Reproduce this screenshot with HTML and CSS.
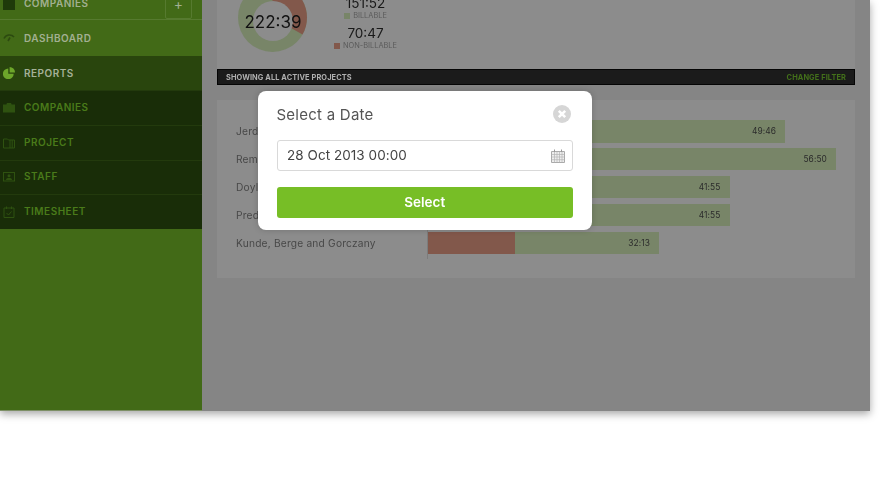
FILE: index.html
```html
<!DOCTYPE html>
<html lang="en">
<head>
<meta charset="utf-8">
<title>Select a Date</title>
<link rel="stylesheet" href="styles.css">
</head>
<body>
<div class="window">
  <div class="app">
    <aside class="sidebar">
      <div class="side-head">
        <svg class="icon" viewBox="0 0 12 12"><rect x="0" y="0" width="12" height="10" fill="#1f3a0a"/></svg>
        <span class="nav-text head-text">COMPANIES</span>
        <span class="plus">+</span>
      </div>
      <a class="nav nav-light">
        <svg class="icon" viewBox="0 0 12 12"><path d="M1 6.500A6 6 0 0 1 11 5" fill="none" stroke="#2c4a10" stroke-width="1.600"/><path d="M5 9l2-3.500" stroke="#2c4a10" stroke-width="1.600"/></svg>
        <span class="nav-text">DASHBOARD</span>
      </a>
      <a class="nav nav-active">
        <svg class="icon" viewBox="0 0 12 12"><path d="M5.300 1.400v5.300h5.400A5.400 5.400 0 1 1 5.300 1.400z" fill="#6da62a"/><path d="M6.600 0A5.400 5.400 0 0 1 12 5.400H6.600z" fill="#6da62a"/></svg>
        <span class="nav-text">REPORTS</span>
      </a>
      <a class="nav nav-dark">
        <svg class="icon" viewBox="0 0 12 12"><path d="M0 3h12v7H0zM4 3V1.500h4V3" fill="#2f5210" stroke="#2f5210"/></svg>
        <span class="nav-text">COMPANIES</span>
      </a>
      <a class="nav nav-dark">
        <svg class="icon" viewBox="0 0 12 12"><path d="M.5 2h4l1 1h6v8h-11zM7 3v8M9.200 3v8" fill="none" stroke="#2f5210"/></svg>
        <span class="nav-text">PROJECT</span>
      </a>
      <a class="nav nav-dark">
        <svg class="icon" viewBox="0 0 12 12"><rect x=".5" y="1.500" width="11" height="8.500" fill="none" stroke="#2f5210"/><circle cx="6" cy="4.800" r="1.500" fill="#2f5210"/><path d="M3 9c0-3 6-3 6 0z" fill="#2f5210"/></svg>
        <span class="nav-text">STAFF</span>
      </a>
      <a class="nav nav-dark nav-last">
        <svg class="icon" viewBox="0 0 12 12"><path d="M1 2h10v9.500H1zM3.500 .5v2.500M8.500 .5v2.500M3.500 7l2 2 3-3.500" fill="none" stroke="#2f5210"/></svg>
        <span class="nav-text">TIMESHEET</span>
      </a>
    </aside>
    <main class="main">
      <section class="summary">
        <svg class="donut" viewBox="0 0 70 70">
          <circle cx="34.500" cy="34.500" r="34.500" fill="#788568"/>
          <path d="M34.500 34.500V0A34.500 34.500 0 0 1 64.500 51.500z" fill="#82584b"/>
          <circle cx="35" cy="38" r="20" fill="#8c8c8c"/>
        </svg>
        <span class="donut-total">222:39</span>
        <div class="legend">
          <div class="legend-value">151:52</div>
          <div class="legend-key"><i class="swatch swatch-green"></i>BILLABLE</div>
          <div class="legend-value legend-gap">70:47</div>
          <div class="legend-key"><i class="swatch swatch-red"></i>NON-BILLABLE</div>
        </div>
      </section>
      <div class="filter-bar">
        <span class="filter-title">SHOWING ALL ACTIVE PROJECTS</span>
        <span class="filter-link">CHANGE FILTER</span>
      </div>
      <section class="chart">
        <div class="row">
          <span class="row-label">Jerde Group</span>
          <div class="bar"><span class="bar-red" style="width:90px"></span><span class="bar-green" style="width:267px">49:46</span></div>
        </div>
        <div class="row">
          <span class="row-label">Remple Inc</span>
          <div class="bar"><span class="bar-red" style="width:90px"></span><span class="bar-green" style="width:318px">56:50</span></div>
        </div>
        <div class="row">
          <span class="row-label">Doyle LLC</span>
          <div class="bar"><span class="bar-red" style="width:90px"></span><span class="bar-green" style="width:211.500px">41:55</span></div>
        </div>
        <div class="row">
          <span class="row-label">Predovic Ltd</span>
          <div class="bar"><span class="bar-red" style="width:90px"></span><span class="bar-green" style="width:211.500px">41:55</span></div>
        </div>
        <div class="row">
          <span class="row-label">Kunde, Berge and Gorczany</span>
          <div class="bar"><span class="bar-red" style="width:87px"></span><span class="bar-green" style="width:144px">32:13</span></div>
        </div>
      </section>
    </main>
  </div>
  <div class="modal">
    <div class="modal-head">
      <h2 class="modal-title">Select a Date</h2>
      <svg class="close" viewBox="0 0 18 18"><circle cx="9" cy="9" r="9" fill="#d6d6d6"/><path d="M5.800 5.800l6.400 6.400M12.200 5.800l-6.400 6.400" stroke="#fff" stroke-width="2.600"/></svg>
    </div>
    <div class="field">
      <span class="field-text">28 Oct 2013 00:00</span>
      <svg class="cal" viewBox="0 0 14 14"><path d="M.5 2.500h13v11H.5z" fill="#eee" stroke="#aaa"/><path d="M.5 5.500h13M.5 8h13M.5 10.700h13M3.500 2.500v11M6 2.500v11M8.500 2.500v11M11 2.500v11" stroke="#b5b5b5" stroke-width=".7"/><path d="M3.500 .5v2.500M10.500 .5v2.500" stroke="#999"/></svg>
    </div>
    <button class="select-btn" type="button">Select</button>
  </div>
</div>
</body>
</html>
```

FILE: styles.css
```css
* { box-sizing: border-box; }
html, body { margin: 0; padding: 0; background: #fff; }
body { font-family: "Inter", "Liberation Sans", sans-serif; height: 500px; overflow: hidden; }

.window {
  position: relative;
  width: 870px;
  height: 411px;
  overflow: hidden;
  background: #858585;
  box-shadow: 0 3px 8px rgba(0,0,0,.35);
}
.app {
  display: flex;
  height: 431px;
  margin-top: -20px;
  filter: blur(.45px);
}

/* Sidebar */
.sidebar {
  flex: 0 0 202px;
  background: #426a17;
  border-bottom: 1px solid #7d8f66;
}
.side-head {
  display: flex;
  align-items: center;
  height: 40px;
  padding: 13px 10px 0 3px;
  border-bottom: 1px solid #567a2f;
}
.icon { flex: 0 0 12px; width: 12px; height: 12px; margin-right: 9px; }
.nav-text {
  font-size: 10px;
  font-weight: 600;
  letter-spacing: .5px;
  color: #a2b091;
}
.head-text { flex: 1; position: relative; top: -3px; }
.plus {
  width: 27px;
  height: 27px;
  margin-top: -1px;
  border: 1px solid #567a2f;
  border-radius: 2px;
  color: #a2b091;
  font-size: 14px;
  line-height: 22px;
  text-align: center;
}
.nav {
  display: flex;
  align-items: center;
  height: 34.700px;
  padding-left: 3px;
}
.nav-light { height: 35.500px; }
.nav-active { background: #29450d; }
.nav-active .nav-text { color: #a5b198; }
.nav-dark { background: #192d08; border-top: 1px solid #233a0d; }
.nav-dark .nav-text { color: #4a7b1a; position: relative; top: -1px; }

/* Main */
.main {
  flex: 1;
  padding: 3px 15px 0;
}
.summary {
  position: relative;
  display: flex;
  height: 86px;
  padding-left: 21px;
  background: #8c8c8c;
}
.donut { width: 70px; height: 70px; flex: none; }
.donut-total {
  position: absolute;
  left: 21px;
  top: 29px;
  width: 70px;
  text-align: center;
  font-size: 17px;
  color: #111;
}
.legend {
  margin-left: 26px;
  padding-top: 12px;
  width: 63px;
  text-align: center;
  white-space: nowrap;
}
.legend-value { font-size: 13.500px; line-height: 16px; color: #181818; }
.legend-gap { margin-top: 4px; }
.legend-key {
  display: flex;
  justify-content: center;
  align-items: center;
  gap: 3px;
  font-size: 7.400px;
  line-height: 10px;
  color: #5b5b5b;
}
.swatch { width: 6px; height: 6px; flex: none; }
.swatch-green { background: #788568; }
.swatch-red { background: #82584b; }

.filter-bar {
  display: flex;
  justify-content: space-between;
  align-items: center;
  height: 16px;
  padding: 0 8px;
  background: #1b1b1b;
  border: 1px solid #050505;
  font-size: 7.400px;
  font-weight: 700;
  letter-spacing: .1px;
}
.filter-title { color: #b0b0b0; }
.filter-link { color: #43701a; }

.chart {
  margin-top: 15px;
  height: 178px;
  padding: 20px 19px 0;
  background: #8c8c8c;
}
.row { display: flex; height: 27.900px; }
.row-label {
  flex: 0 0 192px;
  margin-right: -1px;
  font-size: 10.200px;
  letter-spacing: .2px;
  line-height: 22px;
  color: #484848;
  white-space: nowrap;
}
.bar {
  display: flex;
  height: 22.500px;
  border-left: 1px solid #7c7c7c;
  box-sizing: content-box;
  padding-bottom: 5.400px;
}
.bar-red { background: #82584b; height: 22.500px; flex: none; }
.bar-green {
  flex: none;
  height: 22.500px;
  padding-right: 9px;
  background: #788568;
  font-size: 8.400px;
  letter-spacing: .1px;
  line-height: 22.500px;
  text-align: right;
  color: #2b2b2b;
}

/* Modal */
.modal {
  position: absolute;
  left: 257.500px;
  top: 91px;
  width: 334.500px;
  height: 139px;
  padding: 13px 19px 0;
  background: #fff;
  border-radius: 8px;
  box-shadow: 0 0 6px rgba(0,0,0,.18);
}
.modal-head {
  display: flex;
  justify-content: space-between;
  align-items: center;
  height: 20px;
}
.modal-title {
  margin: 0;
  font-size: 15px;
  font-weight: 400;
  letter-spacing: .25px;
  color: #555;
}
.close { width: 18px; height: 18px; margin-right: 2px; }
.field {
  display: flex;
  justify-content: space-between;
  align-items: center;
  height: 31px;
  margin-top: 16px;
  padding: 0 7px 1px 9.500px;
  border: 1px solid #d9d9d9;
  border-radius: 3px;
}
.field-text { font-size: 13.500px; letter-spacing: .05px; color: #444; }
.cal { width: 14px; height: 14px; margin-top: 2px; }
.select-btn {
  display: block;
  width: 100%;
  height: 31px;
  margin-top: 16px;
  padding: 0 0 2px;
  border: 0;
  border-radius: 3px;
  background: #77be26;
  color: #fff;
  font: 600 13.500px "Inter", "Liberation Sans", sans-serif;
}
```
